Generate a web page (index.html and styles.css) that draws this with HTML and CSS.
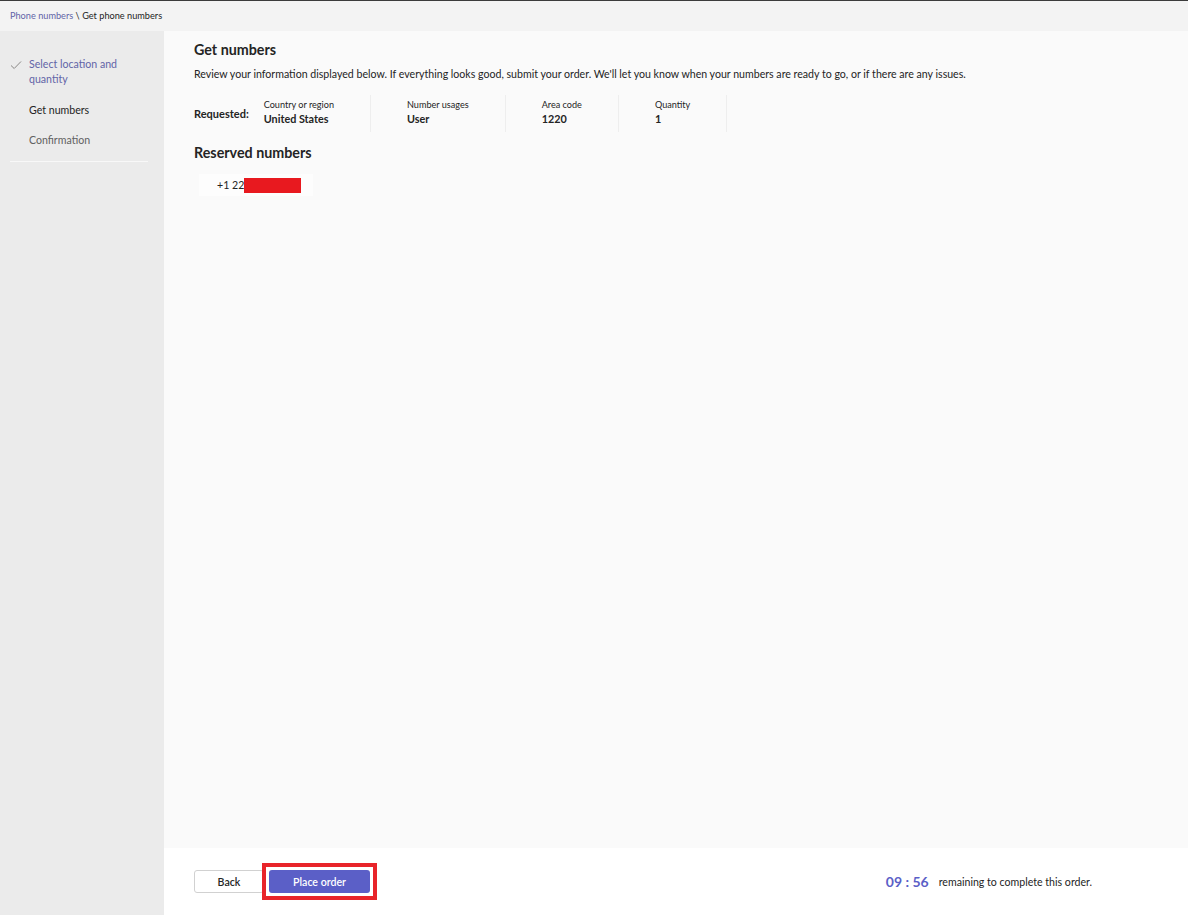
FILE: index.html
```html
<!DOCTYPE html>
<html lang="en">

<head>
    <meta charset="UTF-8">
    <meta name="viewport" content="width=device-width, initial-scale=1.0">
    <title>Get phone numbers</title>
    <link rel="stylesheet" href="styles.css">
</head>

<body>
    <div class="breadcrumb">
        <a href="#">Phone numbers</a> \ <span>Get phone numbers</span>
    </div>

    <div class="layout">
        <div class="sidebar">
            <ul class="steps">
                <li class="step done">
                    <svg class="check" width="12" height="12" viewBox="0 0 12 12">
                        <path d="M1 6.5 L4.2 9.5 L11 2.5" fill="none" stroke="#8a8886" stroke-width="1"/>
                    </svg>
                    <span>Select location and quantity</span>
                </li>
                <li class="step current"><span>Get numbers</span></li>
                <li class="step"><span>Confirmation</span></li>
            </ul>
        </div>

        <div class="content">
            <div class="main">
                <h2>Get numbers</h2>
                <p class="intro">Review your information displayed below. If everything looks good, submit your order. We'll let you know when your numbers are ready to go, or if there are any issues.</p>

                <div class="requested">
                    <div class="requested-label">Requested:</div>
                    <div class="req-item first">
                        <div class="req-name">Country or region</div>
                        <div class="req-value">United States</div>
                    </div>
                    <div class="req-item">
                        <div class="req-name">Number usages</div>
                        <div class="req-value">User</div>
                    </div>
                    <div class="req-item">
                        <div class="req-name">Area code</div>
                        <div class="req-value">1220</div>
                    </div>
                    <div class="req-item">
                        <div class="req-name">Quantity</div>
                        <div class="req-value">1</div>
                    </div>
                </div>

                <h2 class="reserved-title">Reserved numbers</h2>
                <div class="number-chip">
                    <span>+1 22</span><span class="redacted"></span>
                </div>
            </div>

            <div class="footer">
                <div class="buttons">
                    <button class="btn btn-back">Back</button>
                    <div class="highlight">
                        <button class="btn btn-primary">Place order</button>
                    </div>
                </div>
                <div class="timer">
                    <span class="time">09 : 56</span>
                    <span>remaining to complete this order.</span>
                </div>
            </div>
        </div>
    </div>
</body>

</html>
```

FILE: styles.css
```css
* {
    margin: 0;
    padding: 0;
    box-sizing: border-box;
}

html,
body {
    height: 100%;
}

body {
    font-family: Lato, 'Noto Sans', sans-serif;
    background-color: #fafafa;
    color: #242424;
    border-top: 1px solid #3b3b3b;
    display: flex;
    flex-direction: column;
}

.breadcrumb {
    height: 30px;
    background-color: #f3f3f3;
    padding: 9px 10px 0;
    font-size: 9.2px;
    color: #242424;
}

.breadcrumb a {
    color: #6264a7;
    text-decoration: none;
}

.layout {
    flex: 1;
    display: flex;
}

.sidebar {
    width: 164px;
    background-color: #ebebeb;
    padding: 26px 16px 0 10px;
}

.steps {
    list-style: none;
    border-bottom: 1px solid #f8f8f8;
}

.step {
    position: relative;
    padding-left: 19px;
    font-size: 10.6px;
    line-height: 15px;
    color: #616161;
    margin-bottom: 15px;
}

.step:last-child {
    margin-bottom: 13px;
}

.step.done {
    color: #6264a7;
    margin-bottom: 16px;
}

.step.current {
    color: #242424;
}

.step .check {
    position: absolute;
    left: 0;
    top: 2px;
}

.content {
    flex: 1;
    display: flex;
    flex-direction: column;
}

.main {
    flex: 1;
    padding: 10px 30px;
}

h2 {
    font-size: 14.3px;
    font-weight: 700;
    line-height: 18px;
}

.intro {
    font-size: 10.6px;
    line-height: 15px;
    margin-top: 8px;
    color: #242424;
}

.requested {
    display: flex;
    align-items: center;
    margin-top: 13px;
}

.requested-label {
    font-size: 11px;
    font-weight: 700;
    margin-right: 15px;
}

.req-item {
    padding: 3px 36px 5px;
    border-right: 1px solid #eeeeee;
}

.req-item.first {
    padding-left: 0;
}

.req-name {
    font-size: 9.1px;
    line-height: 13px;
}

.req-value {
    font-size: 10.8px;
    font-weight: 700;
    line-height: 16px;
}

.reserved-title {
    margin-top: 12px;
}

.number-chip {
    display: inline-flex;
    align-items: center;
    margin: 12px 0 0 5px;
    height: 22px;
    padding: 0 12px 0 18px;
    background-color: #fdfdfd;
    font-size: 10.6px;
}

.redacted {
    display: inline-block;
    width: 57px;
    height: 15px;
    background-color: #e8191f;
}

.footer {
    height: 67px;
    background-color: #ffffff;
    display: flex;
    align-items: center;
    justify-content: space-between;
    padding: 0 96px 0 30px;
}

.buttons {
    display: flex;
    align-items: center;
    gap: 2px;
}

.btn {
    font-family: inherit;
    font-size: 10.6px;
    font-weight: 600;
    height: 23px;
    border-radius: 3px;
    cursor: pointer;
}

.btn-back {
    width: 70px;
    background-color: #fff;
    border: 1px solid #d1d1d1;
    color: #242424;
}

.highlight {
    border: 4px solid #e8242a;
    padding: 3px 3px;
    margin-left: -4px;
}

.btn-primary {
    width: 101px;
    background-color: #5b5fc7;
    border: none;
    color: #fff;
}

.timer {
    display: flex;
    align-items: center;
    gap: 10px;
    font-size: 10.6px;
}

.timer .time {
    font-size: 14px;
    font-weight: 700;
    color: #5b5fc7;
}
```
